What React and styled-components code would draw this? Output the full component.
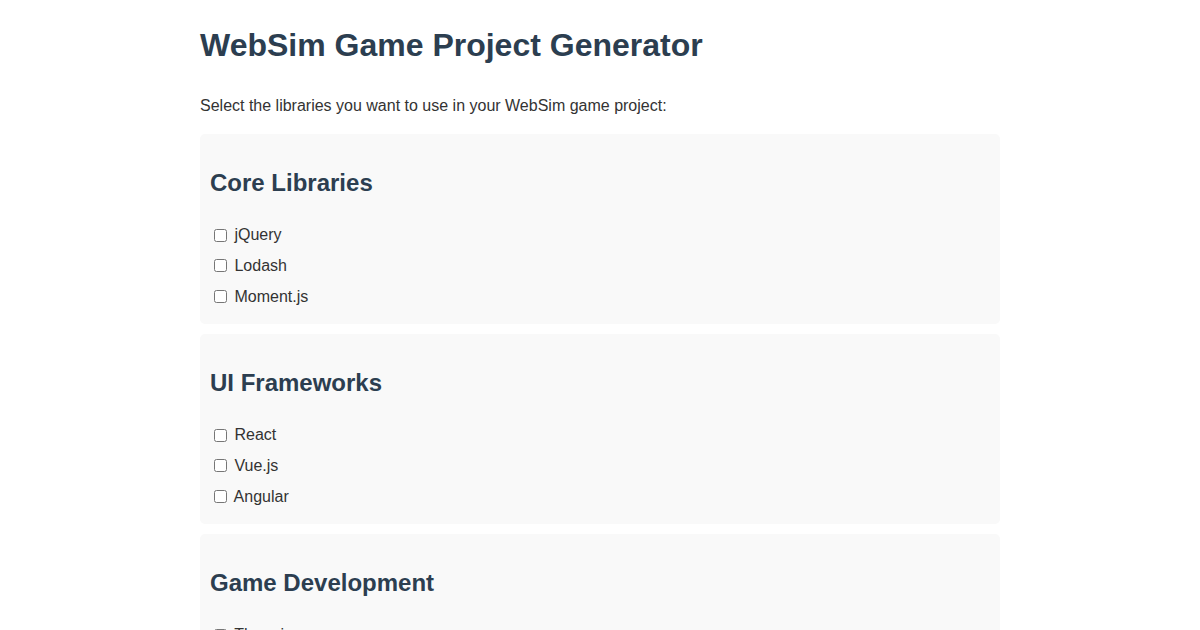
import React from "react";
import styled, { createGlobalStyle } from "styled-components";

const GlobalStyle = createGlobalStyle`
  html, body { margin: 0; padding: 0; background: #ffffff; }
  body {
    font-family: "Liberation Sans", Arial, sans-serif;
    line-height: 1.6;
    color: #333333;
  }
`;

const Page = styled.main`
  max-width: 800px;
  margin: 0 auto;
  padding: 20px;
`;

const Title = styled.h1`
  font-size: 32px;
  font-weight: bold;
  color: #2c3e50;
  margin: 0 0 21.44px;
`;

const Intro = styled.p`
  font-size: 16px;
  margin: 16px 0;
`;

const Section = styled.section`
  background: #f9f9f9;
  border-radius: 5px;
  padding: 10px;
  margin-bottom: 10px;
`;

const SectionTitle = styled.h2`
  font-size: 24px;
  font-weight: bold;
  color: #2c3e50;
  margin: 19.92px 0;
`;

const Option = styled.label`
  display: block;
  font-size: 16px;
  margin-bottom: 5px;
  cursor: pointer;
`;

const Check = styled.input.attrs({ type: "checkbox" })`
  width: 13px;
  height: 13px;
  margin: 3px 3px 3px 4px;
  vertical-align: middle;
  position: relative;
  top: -1px;
`;

const groups = [
  { title: "Core Libraries", items: ["jQuery", "Lodash", "Moment.js"] },
  { title: "UI Frameworks", items: ["React", "Vue.js", "Angular"] },
  { title: "Game Development", items: ["Three.js", "Phaser", "Pixi.js"] },
  { title: "Utilities", items: ["Axios", "Howler.js", "GSAP"] },
];

export default function App() {
  return (
    <>
      <GlobalStyle />
      <Page>
        <Title>WebSim Game Project Generator</Title>
        <Intro>Select the libraries you want to use in your WebSim game project:</Intro>
        {groups.map((g) => (
          <Section key={g.title}>
            <SectionTitle>{g.title}</SectionTitle>
            {g.items.map((it) => (
              <Option key={it}>
                <Check /> {it}
              </Option>
            ))}
          </Section>
        ))}
      </Page>
    </>
  );
}
